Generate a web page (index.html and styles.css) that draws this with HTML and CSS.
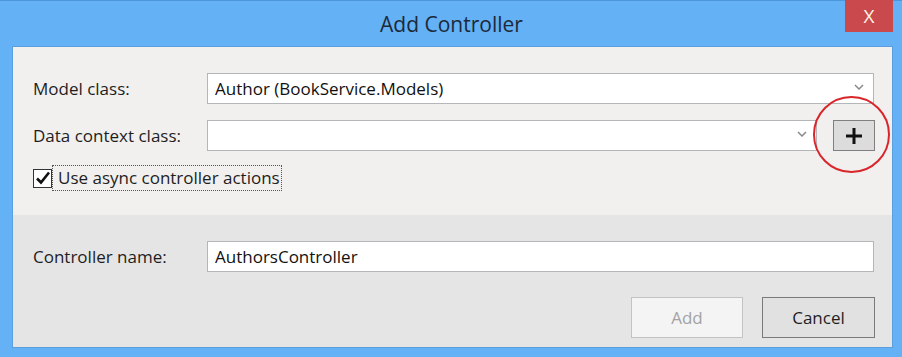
FILE: index.html
```html
<!DOCTYPE html>
<html lang="en">
<head>
    <meta charset="UTF-8">
    <meta name="viewport" content="width=device-width, initial-scale=1.0">
    <title>Add Controller</title>
    <link rel="stylesheet" href="styles.css">
</head>
<body>
    <div class="ventana">
        <div class="titulo">
            <span class="titulo-texto">Add Controller</span>
            <button class="cerrar">X</button>
        </div>
        <div class="contenido">
            <div class="parte-arriba">
                <div class="fila">
                    <label class="etiqueta">Model class:</label>
                    <div class="combo combo-ancho">
                        <span>Author (BookService.Models)</span>
                        <svg class="flecha" width="10" height="6" viewBox="0 0 10 6">
                            <path d="M1 1 L5 5 L9 1" fill="none" stroke="#8a8a8a" stroke-width="1.5"/>
                        </svg>
                    </div>
                </div>
                <div class="fila">
                    <label class="etiqueta">Data context class:</label>
                    <div class="combo combo-corto">
                        <span></span>
                        <svg class="flecha" width="10" height="6" viewBox="0 0 10 6">
                            <path d="M1 1 L5 5 L9 1" fill="none" stroke="#8a8a8a" stroke-width="1.5"/>
                        </svg>
                    </div>
                    <div class="mas-wrap">
                        <button class="mas">
                            <svg width="18" height="18" viewBox="0 0 18 18">
                                <path d="M9 1 V17 M1 9 H17" stroke="#111" stroke-width="3"/>
                            </svg>
                        </button>
                        <span class="circulo"></span>
                    </div>
                </div>
                <div class="fila-check">
                    <span class="check">
                        <svg width="16" height="16" viewBox="0 0 16 16">
                            <path d="M2 8.5 L6 12.5 L14 2.5" fill="none" stroke="#111" stroke-width="2.6"/>
                        </svg>
                    </span>
                    <span class="check-texto">Use async controller actions</span>
                </div>
            </div>
            <div class="parte-abajo">
                <div class="fila">
                    <label class="etiqueta">Controller name:</label>
                    <div class="combo combo-ancho">
                        <span>AuthorsController</span>
                    </div>
                </div>
                <div class="botones">
                    <button class="boton boton-off">Add</button>
                    <button class="boton">Cancel</button>
                </div>
            </div>
        </div>
    </div>
</body>
</html>
```

FILE: styles.css
```css
body {
    margin: 0;
    background-color: #64b1f6;
    font-family: "Open Sans", "Noto Sans", sans-serif;
    color: #1e1e1e;
}

.ventana {
    width: 902px;
    height: 357px;
    border-top: 1px solid #4d96dc;
    box-sizing: border-box;
}

.titulo {
    position: relative;
    height: 45px;
    display: flex;
    justify-content: center;
    align-items: center;
}

.titulo-texto {
    font-size: 21px;
    color: #1c2a3a;
    margin-left: 1px;
}

.cerrar {
    position: absolute;
    top: -1px;
    right: 9px;
    width: 48px;
    height: 32px;
    border: none;
    background-color: #c9494d;
    color: #fff6e6;
    font-family: "Open Sans", sans-serif;
    font-size: 19px;
    padding: 0;
}

.contenido {
    margin: 0 9px 0 12px;
    height: 302px;
    border: 1px solid #5c9fdf;
    box-sizing: border-box;
    display: flex;
    flex-direction: column;
}

.parte-arriba {
    background-color: #f1f0ef;
    height: 168px;
    padding: 26px 0 0 20px;
    box-sizing: border-box;
}

.parte-abajo {
    background-color: #e6e5e5;
    flex: 1;
    padding: 26px 0 0 20px;
}

.fila {
    display: flex;
    align-items: center;
    height: 31px;
    margin-bottom: 16px;
}

.etiqueta {
    width: 174px;
    font-size: 17px;
}

.combo {
    height: 31px;
    box-sizing: border-box;
    background: white;
    border: 1px solid #b4b6ba;
    display: flex;
    align-items: center;
    justify-content: space-between;
    padding: 0 9px 0 7px;
    font-size: 17px;
    color: #111;
}

.combo-ancho {
    width: 667px;
}

.combo-corto {
    width: 610px;
}

.flecha {
    margin-top: -3px;
}

.mas-wrap {
    position: relative;
    margin-left: 16px;
    width: 42px;
    height: 31px;
}

.mas {
    width: 42px;
    height: 31px;
    border: 1px solid #7f7f7f;
    background-color: #dcdcdc;
    padding: 0;
    display: flex;
    align-items: center;
    justify-content: center;
}

.circulo {
    position: absolute;
    left: -20px;
    top: -24px;
    width: 73px;
    height: 73px;
    border: 2px solid #d8262a;
    border-radius: 50%;
}

.fila-check {
    display: flex;
    align-items: center;
    margin-top: -2px;
}

.check {
    width: 17px;
    height: 17px;
    border: 1px solid #333;
    background: white;
    display: flex;
    align-items: center;
    justify-content: center;
}

.check-texto {
    font-size: 17px;
    border: 1px dotted #555;
    padding: 0 1px 1px 5px;
}

.botones {
    display: flex;
    justify-content: flex-end;
    gap: 19px;
    margin-top: 25px;
    margin-right: 17px;
}

.boton {
    width: 113px;
    height: 41px;
    border: 1px solid #7a7a7a;
    background-color: #e1e1e1;
    font-family: "Open Sans", sans-serif;
    font-size: 17px;
    color: #1e1e1e;
}

.boton-off {
    width: 112px;
    border-color: #c3c3c3;
    background-color: #f4f4f5;
    color: #a3a3a3;
}
```
